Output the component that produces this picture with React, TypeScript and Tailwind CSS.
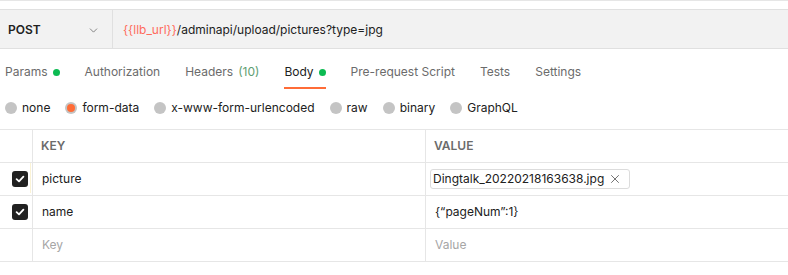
import React from 'react';
import { ChevronDown, X } from 'lucide-react';

const tabs = [
  { label: 'Params', dot: true },
  { label: 'Authorization' },
  { label: 'Headers', count: '(10)' },
  { label: 'Body', dot: true, active: true },
  { label: 'Pre-request Script' },
  { label: 'Tests' },
  { label: 'Settings' },
];

const bodyTypes = ['none', 'form-data', 'x-www-form-urlencoded', 'raw', 'binary', 'GraphQL'];

const Checkbox: React.FC = () => (
  <div className="w-4 h-4 rounded-[3px] bg-[#212121] flex items-center justify-center">
    <svg width="10" height="10" viewBox="0 0 10 10" fill="none">
      <path d="M1.6 5.2 L4 7.4 L8.4 2.6" stroke="white" strokeWidth="1.8" strokeLinecap="round" strokeLinejoin="round" />
    </svg>
  </div>
);

const App: React.FC = () => {
  return (
    <div className="w-[788px] h-[275px] bg-white overflow-hidden font-['Inter',sans-serif] text-[12px] text-[#212121]">
      <div className="h-px bg-[#e6e6e6]" />
      <div className="h-2" />

      {/* URL bar */}
      <div className="h-[40px] flex bg-[#f2f2f2] border-y border-[#e0e0e0]">
        <div className="w-[113px] flex items-center pl-2 pr-[12px] pt-[2px] border-r border-[#e0e0e0]">
          <span className="font-semibold text-[#212121]">POST</span>
          <ChevronDown className="ml-auto text-[#6b6b6b]" size={13} strokeWidth={1.5} />
        </div>
        <div className="flex items-center pl-[10px] pt-[2px]">
          <span className="text-[#ff6c5c]">{'{{llb_url}}'}</span>
          <span>/adminapi/upload/pictures?type=jpg</span>
        </div>
      </div>

      {/* Tabs */}
      <div className="h-[40px] flex items-stretch pl-[5px] gap-[25px]">
        {tabs.map((t) => (
          <div
            key={t.label}
            className={`flex items-center pt-[8px] border-b-2 ${t.active ? 'border-[#ff6c37] text-[#212121]' : 'border-transparent text-[#6b6b6b]'}`}
          >
            <span>{t.label}</span>
            {t.count && <span className="ml-[5px] text-[#5e9e72]">{t.count}</span>}
            {t.dot && <span className="ml-[5px] w-[7px] h-[7px] rounded-full bg-[#0cbb52]" />}
          </div>
        ))}
      </div>

      {/* Body types */}
      <div className="h-[40px] flex items-center pl-[5px] gap-[15px] pb-[2px]">
        {bodyTypes.map((b) => (
          <div key={b} className="flex items-center gap-[5px]">
            {b === 'form-data' ? (
              <span className="w-3 h-3 rounded-full bg-[#c4c4c4] flex items-center justify-center">
                <span className="w-2 h-2 rounded-full bg-[#ff6c37]" />
              </span>
            ) : (
              <span className="w-3 h-3 rounded-full bg-[#c4c4c4]" />
            )}
            <span>{b}</span>
          </div>
        ))}
      </div>

      {/* Table */}
      <div className="grid grid-cols-[33px_393px_1fr] border-t border-[#e6e6e6]">
        <div className="h-[33px] border-r border-b border-[#e6e6e6]" />
        <div className="h-[33px] border-r border-b border-[#e6e6e6] flex items-center pl-2 text-[12px] font-semibold text-[#6b6b6b]">KEY</div>
        <div className="h-[33px] border-b border-[#e6e6e6] flex items-center pl-2 text-[12px] font-semibold text-[#6b6b6b]">VALUE</div>

        <div className="h-[33px] border-r border-b border-[#e6e6e6] flex items-center pl-3 relative">
          <Checkbox />
          <span className="absolute right-[1px] top-0 h-[30px] w-px bg-[#fbf3d5]" />
        </div>
        <div className="h-[33px] border-r border-b border-[#e6e6e6] flex items-center pl-[9px]">picture</div>
        <div className="h-[33px] border-b border-[#e6e6e6] flex items-center pl-1">
          <div className="h-[20px] w-[200px] flex items-center border border-[#dcdcdc] rounded-[3px] pl-[2px] pr-[7px]">
            <span>Dingtalk_20220218163638.jpg</span>
            <X className="ml-auto text-[#555555]" size={14} strokeWidth={1.4} />
          </div>
        </div>

        <div className="h-[33px] border-r border-b border-[#e6e6e6] flex items-center pl-3">
          <Checkbox />
        </div>
        <div className="h-[33px] border-r border-b border-[#e6e6e6] flex items-center pl-[9px]">name</div>
        <div className="h-[33px] border-b border-[#e6e6e6] flex items-center pl-[9px]">{'{“pageNum”:1}'}</div>

        <div className="h-[33px] border-r border-b border-[#e6e6e6]" />
        <div className="h-[33px] border-r border-b border-[#e6e6e6] flex items-center pl-[9px] text-[#a6a6a6]">Key</div>
        <div className="h-[33px] border-b border-[#e6e6e6] flex items-center pl-[9px] text-[#a6a6a6]">Value</div>
      </div>
    </div>
  );
};

export default App;
